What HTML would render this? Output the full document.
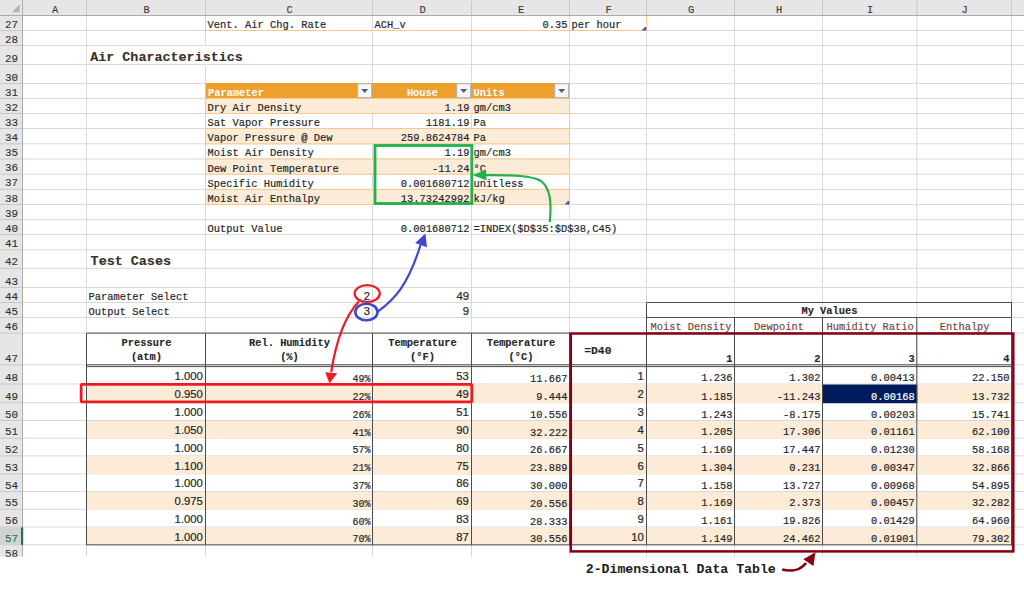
<!DOCTYPE html>
<html><head><meta charset="utf-8"><style>
html,body{margin:0;padding:0;background:#fff;overflow:hidden;width:1024px;height:589px}
svg{display:block}
text{white-space:pre}
</style></head><body>
<svg width="1024" height="589" viewBox="0 0 1024 589">
<rect x="0.00" y="0.00" width="1024.00" height="589.00" fill="#ffffff" />
<line x1="86.50" y1="16.00" x2="86.50" y2="556.80" stroke="#d9d9d9" stroke-width="1"/>
<line x1="205.50" y1="16.00" x2="205.50" y2="556.80" stroke="#d9d9d9" stroke-width="1"/>
<line x1="372.50" y1="16.00" x2="372.50" y2="556.80" stroke="#d9d9d9" stroke-width="1"/>
<line x1="471.50" y1="16.00" x2="471.50" y2="556.80" stroke="#d9d9d9" stroke-width="1"/>
<line x1="569.50" y1="16.00" x2="569.50" y2="556.80" stroke="#d9d9d9" stroke-width="1"/>
<line x1="646.50" y1="16.00" x2="646.50" y2="556.80" stroke="#d9d9d9" stroke-width="1"/>
<line x1="734.50" y1="16.00" x2="734.50" y2="556.80" stroke="#d9d9d9" stroke-width="1"/>
<line x1="822.50" y1="16.00" x2="822.50" y2="556.80" stroke="#d9d9d9" stroke-width="1"/>
<line x1="916.80" y1="16.00" x2="916.80" y2="556.80" stroke="#d9d9d9" stroke-width="1"/>
<line x1="1011.50" y1="16.00" x2="1011.50" y2="556.80" stroke="#d9d9d9" stroke-width="1"/>
<line x1="23.00" y1="30.50" x2="1024.00" y2="30.50" stroke="#d9d9d9" stroke-width="1"/>
<line x1="23.00" y1="45.50" x2="1024.00" y2="45.50" stroke="#d9d9d9" stroke-width="1"/>
<line x1="23.00" y1="64.50" x2="1024.00" y2="64.50" stroke="#d9d9d9" stroke-width="1"/>
<line x1="23.00" y1="83.50" x2="1024.00" y2="83.50" stroke="#d9d9d9" stroke-width="1"/>
<line x1="23.00" y1="98.50" x2="1024.00" y2="98.50" stroke="#d9d9d9" stroke-width="1"/>
<line x1="23.00" y1="113.50" x2="1024.00" y2="113.50" stroke="#d9d9d9" stroke-width="1"/>
<line x1="23.00" y1="128.50" x2="1024.00" y2="128.50" stroke="#d9d9d9" stroke-width="1"/>
<line x1="23.00" y1="143.80" x2="1024.00" y2="143.80" stroke="#d9d9d9" stroke-width="1"/>
<line x1="23.00" y1="159.00" x2="1024.00" y2="159.00" stroke="#d9d9d9" stroke-width="1"/>
<line x1="23.00" y1="174.20" x2="1024.00" y2="174.20" stroke="#d9d9d9" stroke-width="1"/>
<line x1="23.00" y1="189.40" x2="1024.00" y2="189.40" stroke="#d9d9d9" stroke-width="1"/>
<line x1="23.00" y1="204.50" x2="1024.00" y2="204.50" stroke="#d9d9d9" stroke-width="1"/>
<line x1="23.00" y1="219.60" x2="1024.00" y2="219.60" stroke="#d9d9d9" stroke-width="1"/>
<line x1="23.00" y1="234.60" x2="1024.00" y2="234.60" stroke="#d9d9d9" stroke-width="1"/>
<line x1="23.00" y1="249.80" x2="1024.00" y2="249.80" stroke="#d9d9d9" stroke-width="1"/>
<line x1="23.00" y1="268.30" x2="1024.00" y2="268.30" stroke="#d9d9d9" stroke-width="1"/>
<line x1="23.00" y1="287.50" x2="1024.00" y2="287.50" stroke="#d9d9d9" stroke-width="1"/>
<line x1="23.00" y1="302.50" x2="1024.00" y2="302.50" stroke="#d9d9d9" stroke-width="1"/>
<line x1="23.00" y1="317.50" x2="1024.00" y2="317.50" stroke="#d9d9d9" stroke-width="1"/>
<line x1="23.00" y1="333.10" x2="1024.00" y2="333.10" stroke="#d9d9d9" stroke-width="1"/>
<line x1="23.00" y1="364.80" x2="1024.00" y2="364.80" stroke="#d9d9d9" stroke-width="1"/>
<line x1="23.00" y1="384.00" x2="1024.00" y2="384.00" stroke="#d9d9d9" stroke-width="1"/>
<line x1="23.00" y1="402.70" x2="1024.00" y2="402.70" stroke="#d9d9d9" stroke-width="1"/>
<line x1="23.00" y1="420.50" x2="1024.00" y2="420.50" stroke="#d9d9d9" stroke-width="1"/>
<line x1="23.00" y1="438.20" x2="1024.00" y2="438.20" stroke="#d9d9d9" stroke-width="1"/>
<line x1="23.00" y1="455.90" x2="1024.00" y2="455.90" stroke="#d9d9d9" stroke-width="1"/>
<line x1="23.00" y1="473.90" x2="1024.00" y2="473.90" stroke="#d9d9d9" stroke-width="1"/>
<line x1="23.00" y1="491.50" x2="1024.00" y2="491.50" stroke="#d9d9d9" stroke-width="1"/>
<line x1="23.00" y1="509.30" x2="1024.00" y2="509.30" stroke="#d9d9d9" stroke-width="1"/>
<line x1="23.00" y1="527.00" x2="1024.00" y2="527.00" stroke="#d9d9d9" stroke-width="1"/>
<line x1="23.00" y1="544.80" x2="1024.00" y2="544.80" stroke="#d9d9d9" stroke-width="1"/>
<rect x="0.00" y="0.00" width="1024.00" height="15.00" fill="#e6e6e6" />
<rect x="0.00" y="0.00" width="22.00" height="556.80" fill="#e6e6e6" />
<line x1="86.50" y1="1.00" x2="86.50" y2="15.00" stroke="#c6c6c6" stroke-width="1"/>
<line x1="205.50" y1="1.00" x2="205.50" y2="15.00" stroke="#c6c6c6" stroke-width="1"/>
<line x1="372.50" y1="1.00" x2="372.50" y2="15.00" stroke="#c6c6c6" stroke-width="1"/>
<line x1="471.50" y1="1.00" x2="471.50" y2="15.00" stroke="#c6c6c6" stroke-width="1"/>
<line x1="569.50" y1="1.00" x2="569.50" y2="15.00" stroke="#c6c6c6" stroke-width="1"/>
<line x1="646.50" y1="1.00" x2="646.50" y2="15.00" stroke="#c6c6c6" stroke-width="1"/>
<line x1="734.50" y1="1.00" x2="734.50" y2="15.00" stroke="#c6c6c6" stroke-width="1"/>
<line x1="822.50" y1="1.00" x2="822.50" y2="15.00" stroke="#c6c6c6" stroke-width="1"/>
<line x1="916.80" y1="1.00" x2="916.80" y2="15.00" stroke="#c6c6c6" stroke-width="1"/>
<line x1="1011.50" y1="1.00" x2="1011.50" y2="15.00" stroke="#c6c6c6" stroke-width="1"/>
<line x1="0.00" y1="15.50" x2="1024.00" y2="15.50" stroke="#ababab" stroke-width="1"/>
<line x1="22.50" y1="0.00" x2="22.50" y2="556.80" stroke="#ababab" stroke-width="1"/>
<line x1="0.00" y1="30.50" x2="22.00" y2="30.50" stroke="#c8c8c8" stroke-width="1"/>
<line x1="0.00" y1="45.50" x2="22.00" y2="45.50" stroke="#c8c8c8" stroke-width="1"/>
<line x1="0.00" y1="64.50" x2="22.00" y2="64.50" stroke="#c8c8c8" stroke-width="1"/>
<line x1="0.00" y1="83.50" x2="22.00" y2="83.50" stroke="#c8c8c8" stroke-width="1"/>
<line x1="0.00" y1="98.50" x2="22.00" y2="98.50" stroke="#c8c8c8" stroke-width="1"/>
<line x1="0.00" y1="113.50" x2="22.00" y2="113.50" stroke="#c8c8c8" stroke-width="1"/>
<line x1="0.00" y1="128.50" x2="22.00" y2="128.50" stroke="#c8c8c8" stroke-width="1"/>
<line x1="0.00" y1="143.80" x2="22.00" y2="143.80" stroke="#c8c8c8" stroke-width="1"/>
<line x1="0.00" y1="159.00" x2="22.00" y2="159.00" stroke="#c8c8c8" stroke-width="1"/>
<line x1="0.00" y1="174.20" x2="22.00" y2="174.20" stroke="#c8c8c8" stroke-width="1"/>
<line x1="0.00" y1="189.40" x2="22.00" y2="189.40" stroke="#c8c8c8" stroke-width="1"/>
<line x1="0.00" y1="204.50" x2="22.00" y2="204.50" stroke="#c8c8c8" stroke-width="1"/>
<line x1="0.00" y1="219.60" x2="22.00" y2="219.60" stroke="#c8c8c8" stroke-width="1"/>
<line x1="0.00" y1="234.60" x2="22.00" y2="234.60" stroke="#c8c8c8" stroke-width="1"/>
<line x1="0.00" y1="249.80" x2="22.00" y2="249.80" stroke="#c8c8c8" stroke-width="1"/>
<line x1="0.00" y1="268.30" x2="22.00" y2="268.30" stroke="#c8c8c8" stroke-width="1"/>
<line x1="0.00" y1="287.50" x2="22.00" y2="287.50" stroke="#c8c8c8" stroke-width="1"/>
<line x1="0.00" y1="302.50" x2="22.00" y2="302.50" stroke="#c8c8c8" stroke-width="1"/>
<line x1="0.00" y1="317.50" x2="22.00" y2="317.50" stroke="#c8c8c8" stroke-width="1"/>
<line x1="0.00" y1="333.10" x2="22.00" y2="333.10" stroke="#c8c8c8" stroke-width="1"/>
<line x1="0.00" y1="364.80" x2="22.00" y2="364.80" stroke="#c8c8c8" stroke-width="1"/>
<line x1="0.00" y1="384.00" x2="22.00" y2="384.00" stroke="#c8c8c8" stroke-width="1"/>
<line x1="0.00" y1="402.70" x2="22.00" y2="402.70" stroke="#c8c8c8" stroke-width="1"/>
<line x1="0.00" y1="420.50" x2="22.00" y2="420.50" stroke="#c8c8c8" stroke-width="1"/>
<line x1="0.00" y1="438.20" x2="22.00" y2="438.20" stroke="#c8c8c8" stroke-width="1"/>
<line x1="0.00" y1="455.90" x2="22.00" y2="455.90" stroke="#c8c8c8" stroke-width="1"/>
<line x1="0.00" y1="473.90" x2="22.00" y2="473.90" stroke="#c8c8c8" stroke-width="1"/>
<line x1="0.00" y1="491.50" x2="22.00" y2="491.50" stroke="#c8c8c8" stroke-width="1"/>
<line x1="0.00" y1="509.30" x2="22.00" y2="509.30" stroke="#c8c8c8" stroke-width="1"/>
<line x1="0.00" y1="527.00" x2="22.00" y2="527.00" stroke="#c8c8c8" stroke-width="1"/>
<line x1="0.00" y1="544.80" x2="22.00" y2="544.80" stroke="#c8c8c8" stroke-width="1"/>
<polygon points="12,12.2 19.6,4.6 19.6,12.2" fill="#b4b4b4"/>
<text x="55.00" y="12.60" text-anchor="middle" font-family='"Liberation Mono", monospace' font-size="10.42" font-weight="normal" fill="#3c3c3c" stroke="#3c3c3c" stroke-width="0.15" >A</text>
<text x="146.50" y="12.60" text-anchor="middle" font-family='"Liberation Mono", monospace' font-size="10.42" font-weight="normal" fill="#3c3c3c" stroke="#3c3c3c" stroke-width="0.15" >B</text>
<text x="289.50" y="12.60" text-anchor="middle" font-family='"Liberation Mono", monospace' font-size="10.42" font-weight="normal" fill="#3c3c3c" stroke="#3c3c3c" stroke-width="0.15" >C</text>
<text x="422.50" y="12.60" text-anchor="middle" font-family='"Liberation Mono", monospace' font-size="10.42" font-weight="normal" fill="#3c3c3c" stroke="#3c3c3c" stroke-width="0.15" >D</text>
<text x="521.00" y="12.60" text-anchor="middle" font-family='"Liberation Mono", monospace' font-size="10.42" font-weight="normal" fill="#3c3c3c" stroke="#3c3c3c" stroke-width="0.15" >E</text>
<text x="608.50" y="12.60" text-anchor="middle" font-family='"Liberation Mono", monospace' font-size="10.42" font-weight="normal" fill="#3c3c3c" stroke="#3c3c3c" stroke-width="0.15" >F</text>
<text x="691.00" y="12.60" text-anchor="middle" font-family='"Liberation Mono", monospace' font-size="10.42" font-weight="normal" fill="#3c3c3c" stroke="#3c3c3c" stroke-width="0.15" >G</text>
<text x="779.00" y="12.60" text-anchor="middle" font-family='"Liberation Mono", monospace' font-size="10.42" font-weight="normal" fill="#3c3c3c" stroke="#3c3c3c" stroke-width="0.15" >H</text>
<text x="870.15" y="12.60" text-anchor="middle" font-family='"Liberation Mono", monospace' font-size="10.42" font-weight="normal" fill="#3c3c3c" stroke="#3c3c3c" stroke-width="0.15" >I</text>
<text x="964.65" y="12.60" text-anchor="middle" font-family='"Liberation Mono", monospace' font-size="10.42" font-weight="normal" fill="#3c3c3c" stroke="#3c3c3c" stroke-width="0.15" >J</text>
<rect x="0.00" y="527.50" width="22.00" height="16.80" fill="#d3d3d3" />
<rect x="21.00" y="527.50" width="2.20" height="17.30" fill="#217346" />
<text x="18.00" y="27.50" text-anchor="end" font-family='"Liberation Mono", monospace' font-size="10.9" font-weight="normal" fill="#333333" stroke="#333333" stroke-width="0.15" >27</text>
<text x="18.00" y="42.50" text-anchor="end" font-family='"Liberation Mono", monospace' font-size="10.9" font-weight="normal" fill="#333333" stroke="#333333" stroke-width="0.15" >28</text>
<text x="18.00" y="61.50" text-anchor="end" font-family='"Liberation Mono", monospace' font-size="10.9" font-weight="normal" fill="#333333" stroke="#333333" stroke-width="0.15" >29</text>
<text x="18.00" y="80.50" text-anchor="end" font-family='"Liberation Mono", monospace' font-size="10.9" font-weight="normal" fill="#333333" stroke="#333333" stroke-width="0.15" >30</text>
<text x="18.00" y="95.50" text-anchor="end" font-family='"Liberation Mono", monospace' font-size="10.9" font-weight="normal" fill="#333333" stroke="#333333" stroke-width="0.15" >31</text>
<text x="18.00" y="110.50" text-anchor="end" font-family='"Liberation Mono", monospace' font-size="10.9" font-weight="normal" fill="#333333" stroke="#333333" stroke-width="0.15" >32</text>
<text x="18.00" y="125.50" text-anchor="end" font-family='"Liberation Mono", monospace' font-size="10.9" font-weight="normal" fill="#333333" stroke="#333333" stroke-width="0.15" >33</text>
<text x="18.00" y="140.80" text-anchor="end" font-family='"Liberation Mono", monospace' font-size="10.9" font-weight="normal" fill="#333333" stroke="#333333" stroke-width="0.15" >34</text>
<text x="18.00" y="156.00" text-anchor="end" font-family='"Liberation Mono", monospace' font-size="10.9" font-weight="normal" fill="#333333" stroke="#333333" stroke-width="0.15" >35</text>
<text x="18.00" y="171.20" text-anchor="end" font-family='"Liberation Mono", monospace' font-size="10.9" font-weight="normal" fill="#333333" stroke="#333333" stroke-width="0.15" >36</text>
<text x="18.00" y="186.40" text-anchor="end" font-family='"Liberation Mono", monospace' font-size="10.9" font-weight="normal" fill="#333333" stroke="#333333" stroke-width="0.15" >37</text>
<text x="18.00" y="201.50" text-anchor="end" font-family='"Liberation Mono", monospace' font-size="10.9" font-weight="normal" fill="#333333" stroke="#333333" stroke-width="0.15" >38</text>
<text x="18.00" y="216.60" text-anchor="end" font-family='"Liberation Mono", monospace' font-size="10.9" font-weight="normal" fill="#333333" stroke="#333333" stroke-width="0.15" >39</text>
<text x="18.00" y="231.60" text-anchor="end" font-family='"Liberation Mono", monospace' font-size="10.9" font-weight="normal" fill="#333333" stroke="#333333" stroke-width="0.15" >40</text>
<text x="18.00" y="246.80" text-anchor="end" font-family='"Liberation Mono", monospace' font-size="10.9" font-weight="normal" fill="#333333" stroke="#333333" stroke-width="0.15" >41</text>
<text x="18.00" y="265.30" text-anchor="end" font-family='"Liberation Mono", monospace' font-size="10.9" font-weight="normal" fill="#333333" stroke="#333333" stroke-width="0.15" >42</text>
<text x="18.00" y="284.50" text-anchor="end" font-family='"Liberation Mono", monospace' font-size="10.9" font-weight="normal" fill="#333333" stroke="#333333" stroke-width="0.15" >43</text>
<text x="18.00" y="299.50" text-anchor="end" font-family='"Liberation Mono", monospace' font-size="10.9" font-weight="normal" fill="#333333" stroke="#333333" stroke-width="0.15" >44</text>
<text x="18.00" y="314.50" text-anchor="end" font-family='"Liberation Mono", monospace' font-size="10.9" font-weight="normal" fill="#333333" stroke="#333333" stroke-width="0.15" >45</text>
<text x="18.00" y="330.10" text-anchor="end" font-family='"Liberation Mono", monospace' font-size="10.9" font-weight="normal" fill="#333333" stroke="#333333" stroke-width="0.15" >46</text>
<text x="18.00" y="361.80" text-anchor="end" font-family='"Liberation Mono", monospace' font-size="10.9" font-weight="normal" fill="#333333" stroke="#333333" stroke-width="0.15" >47</text>
<text x="18.00" y="381.00" text-anchor="end" font-family='"Liberation Mono", monospace' font-size="10.9" font-weight="normal" fill="#333333" stroke="#333333" stroke-width="0.15" >48</text>
<text x="18.00" y="399.70" text-anchor="end" font-family='"Liberation Mono", monospace' font-size="10.9" font-weight="normal" fill="#333333" stroke="#333333" stroke-width="0.15" >49</text>
<text x="18.00" y="417.50" text-anchor="end" font-family='"Liberation Mono", monospace' font-size="10.9" font-weight="normal" fill="#333333" stroke="#333333" stroke-width="0.15" >50</text>
<text x="18.00" y="435.20" text-anchor="end" font-family='"Liberation Mono", monospace' font-size="10.9" font-weight="normal" fill="#333333" stroke="#333333" stroke-width="0.15" >51</text>
<text x="18.00" y="452.90" text-anchor="end" font-family='"Liberation Mono", monospace' font-size="10.9" font-weight="normal" fill="#333333" stroke="#333333" stroke-width="0.15" >52</text>
<text x="18.00" y="470.90" text-anchor="end" font-family='"Liberation Mono", monospace' font-size="10.9" font-weight="normal" fill="#333333" stroke="#333333" stroke-width="0.15" >53</text>
<text x="18.00" y="488.50" text-anchor="end" font-family='"Liberation Mono", monospace' font-size="10.9" font-weight="normal" fill="#333333" stroke="#333333" stroke-width="0.15" >54</text>
<text x="18.00" y="506.30" text-anchor="end" font-family='"Liberation Mono", monospace' font-size="10.9" font-weight="normal" fill="#333333" stroke="#333333" stroke-width="0.15" >55</text>
<text x="18.00" y="524.00" text-anchor="end" font-family='"Liberation Mono", monospace' font-size="10.9" font-weight="normal" fill="#333333" stroke="#333333" stroke-width="0.15" >56</text>
<text x="18.00" y="541.80" text-anchor="end" font-family='"Liberation Mono", monospace' font-size="10.9" font-weight="normal" fill="#217346" stroke="#217346" stroke-width="0.15" >57</text>
<text x="18.00" y="556.50" text-anchor="end" font-family='"Liberation Mono", monospace' font-size="10.9" font-weight="normal" fill="#333333" stroke="#333333" stroke-width="0.15" >58</text>
<rect x="0.00" y="556.80" width="1024.00" height="32.20" fill="#ffffff" />
<text x="207.60" y="27.90" text-anchor="start" font-family='"Liberation Mono", monospace' font-size="10.42" font-weight="normal" fill="#262626" stroke="#262626" stroke-width="0.18" >Vent. Air Chg. Rate</text>
<text x="374.60" y="27.90" text-anchor="start" font-family='"Liberation Mono", monospace' font-size="10.42" font-weight="normal" fill="#262626" stroke="#262626" stroke-width="0.18" >ACH_v</text>
<text x="567.40" y="27.90" text-anchor="end" font-family='"Liberation Mono", monospace' font-size="10.42" font-weight="normal" fill="#262626" stroke="#262626" stroke-width="0.18" >0.35</text>
<text x="571.60" y="27.90" text-anchor="start" font-family='"Liberation Mono", monospace' font-size="10.42" font-weight="normal" fill="#262626" stroke="#262626" stroke-width="0.18" >per hour</text>
<line x1="205.50" y1="30.50" x2="647.00" y2="30.50" stroke="#f6c88d" stroke-width="1"/>
<line x1="205.50" y1="16.00" x2="205.50" y2="31.00" stroke="#f6c88d" stroke-width="1"/>
<line x1="646.50" y1="16.00" x2="646.50" y2="31.00" stroke="#f6c88d" stroke-width="1"/>
<path d="M642.4,28.8 h1.9 v-1.9 h1.9 v3.7 h-3.8 z" fill="#3b4fb8"/>
<rect x="205.00" y="46.00" width="1.20" height="18.80" fill="#ffffff" />
<rect x="569.00" y="220.10" width="1.20" height="14.80" fill="#ffffff" />
<text x="90.20" y="60.60" text-anchor="start" font-family='"Liberation Mono", monospace' font-size="13.4" font-weight="bold" fill="#3a3028" stroke="#3a3028" stroke-width="0.12" >Air Characteristics</text>
<rect x="206.00" y="83.00" width="364.00" height="15.50" fill="#eea02f" />
<rect x="206.00" y="99.00" width="364.00" height="15.00" fill="#fcebd7" />
<rect x="206.00" y="129.00" width="364.00" height="15.30" fill="#fcebd7" />
<rect x="206.00" y="159.50" width="364.00" height="15.20" fill="#fcebd7" />
<rect x="206.00" y="189.90" width="364.00" height="15.10" fill="#fcebd7" />
<line x1="205.50" y1="98.50" x2="570.00" y2="98.50" stroke="#f6c88d" stroke-width="1"/>
<line x1="205.50" y1="113.50" x2="570.00" y2="113.50" stroke="#f6c88d" stroke-width="1"/>
<line x1="205.50" y1="128.50" x2="570.00" y2="128.50" stroke="#f6c88d" stroke-width="1"/>
<line x1="205.50" y1="143.80" x2="570.00" y2="143.80" stroke="#f6c88d" stroke-width="1"/>
<line x1="205.50" y1="159.00" x2="570.00" y2="159.00" stroke="#f6c88d" stroke-width="1"/>
<line x1="205.50" y1="174.20" x2="570.00" y2="174.20" stroke="#f6c88d" stroke-width="1"/>
<line x1="205.50" y1="189.40" x2="570.00" y2="189.40" stroke="#f6c88d" stroke-width="1"/>
<line x1="205.50" y1="204.50" x2="570.00" y2="204.50" stroke="#f6c88d" stroke-width="1"/>
<line x1="205.50" y1="83.00" x2="205.50" y2="205.00" stroke="#f6c88d" stroke-width="1"/>
<line x1="569.50" y1="83.00" x2="569.50" y2="205.00" stroke="#f6c88d" stroke-width="1"/>
<text x="207.90" y="95.90" text-anchor="start" font-family='"Liberation Mono", monospace' font-size="10.42" font-weight="bold" fill="#ffffff" >Parameter</text>
<text x="422.50" y="95.90" text-anchor="middle" font-family='"Liberation Mono", monospace' font-size="10.42" font-weight="bold" fill="#ffffff" >House</text>
<text x="473.60" y="95.90" text-anchor="start" font-family='"Liberation Mono", monospace' font-size="10.42" font-weight="bold" fill="#ffffff" >Units</text>
<rect x="357.70" y="83.70" width="14" height="14" fill="#f6f7fa" stroke="#a9b0bc" stroke-width="1"/>
<polygon points="361.20,89.10 368.20,89.10 364.70,93.10" fill="#5f5f5f"/>
<rect x="456.70" y="83.70" width="14" height="14" fill="#f6f7fa" stroke="#a9b0bc" stroke-width="1"/>
<polygon points="460.20,89.10 467.20,89.10 463.70,93.10" fill="#5f5f5f"/>
<rect x="554.70" y="83.70" width="14" height="14" fill="#f6f7fa" stroke="#a9b0bc" stroke-width="1"/>
<polygon points="558.20,89.10 565.20,89.10 561.70,93.10" fill="#5f5f5f"/>
<text x="207.60" y="110.90" text-anchor="start" font-family='"Liberation Mono", monospace' font-size="10.42" font-weight="normal" fill="#262626" stroke="#262626" stroke-width="0.18" >Dry Air Density</text>
<text x="469.40" y="110.90" text-anchor="end" font-family='"Liberation Mono", monospace' font-size="10.42" font-weight="normal" fill="#262626" stroke="#262626" stroke-width="0.18" >1.19</text>
<text x="473.60" y="110.90" text-anchor="start" font-family='"Liberation Mono", monospace' font-size="10.42" font-weight="normal" fill="#262626" stroke="#262626" stroke-width="0.18" >gm/cm3</text>
<text x="207.60" y="125.90" text-anchor="start" font-family='"Liberation Mono", monospace' font-size="10.42" font-weight="normal" fill="#262626" stroke="#262626" stroke-width="0.18" >Sat Vapor Pressure</text>
<text x="469.40" y="125.90" text-anchor="end" font-family='"Liberation Mono", monospace' font-size="10.42" font-weight="normal" fill="#262626" stroke="#262626" stroke-width="0.18" >1181.19</text>
<text x="473.60" y="125.90" text-anchor="start" font-family='"Liberation Mono", monospace' font-size="10.42" font-weight="normal" fill="#262626" stroke="#262626" stroke-width="0.18" >Pa</text>
<text x="207.60" y="141.20" text-anchor="start" font-family='"Liberation Mono", monospace' font-size="10.42" font-weight="normal" fill="#262626" stroke="#262626" stroke-width="0.18" >Vapor Pressure @ Dew</text>
<text x="469.40" y="141.20" text-anchor="end" font-family='"Liberation Mono", monospace' font-size="10.42" font-weight="normal" fill="#262626" stroke="#262626" stroke-width="0.18" >259.8624784</text>
<text x="473.60" y="141.20" text-anchor="start" font-family='"Liberation Mono", monospace' font-size="10.42" font-weight="normal" fill="#262626" stroke="#262626" stroke-width="0.18" >Pa</text>
<text x="207.60" y="156.40" text-anchor="start" font-family='"Liberation Mono", monospace' font-size="10.42" font-weight="normal" fill="#262626" stroke="#262626" stroke-width="0.18" >Moist Air Density</text>
<text x="469.40" y="156.40" text-anchor="end" font-family='"Liberation Mono", monospace' font-size="10.42" font-weight="normal" fill="#262626" stroke="#262626" stroke-width="0.18" >1.19</text>
<text x="473.60" y="156.40" text-anchor="start" font-family='"Liberation Mono", monospace' font-size="10.42" font-weight="normal" fill="#262626" stroke="#262626" stroke-width="0.18" >gm/cm3</text>
<text x="207.60" y="171.60" text-anchor="start" font-family='"Liberation Mono", monospace' font-size="10.42" font-weight="normal" fill="#262626" stroke="#262626" stroke-width="0.18" >Dew Point Temperature</text>
<text x="469.40" y="171.60" text-anchor="end" font-family='"Liberation Mono", monospace' font-size="10.42" font-weight="normal" fill="#262626" stroke="#262626" stroke-width="0.18" >-11.24</text>
<text x="473.60" y="171.60" text-anchor="start" font-family='"Liberation Mono", monospace' font-size="10.42" font-weight="normal" fill="#262626" stroke="#262626" stroke-width="0.18" >°C</text>
<text x="207.60" y="186.80" text-anchor="start" font-family='"Liberation Mono", monospace' font-size="10.42" font-weight="normal" fill="#262626" stroke="#262626" stroke-width="0.18" >Specific Humidity</text>
<text x="469.40" y="186.80" text-anchor="end" font-family='"Liberation Mono", monospace' font-size="10.42" font-weight="normal" fill="#262626" stroke="#262626" stroke-width="0.18" >0.001680712</text>
<text x="473.60" y="186.80" text-anchor="start" font-family='"Liberation Mono", monospace' font-size="10.42" font-weight="normal" fill="#262626" stroke="#262626" stroke-width="0.18" >unitless</text>
<text x="207.60" y="201.90" text-anchor="start" font-family='"Liberation Mono", monospace' font-size="10.42" font-weight="normal" fill="#262626" stroke="#262626" stroke-width="0.18" >Moist Air Enthalpy</text>
<text x="469.40" y="201.90" text-anchor="end" font-family='"Liberation Mono", monospace' font-size="10.42" font-weight="normal" fill="#262626" stroke="#262626" stroke-width="0.18" >13.73242992</text>
<text x="473.60" y="201.90" text-anchor="start" font-family='"Liberation Mono", monospace' font-size="10.42" font-weight="normal" fill="#262626" stroke="#262626" stroke-width="0.18" >kJ/kg</text>
<path d="M565.4,202.8 h1.9 v-1.9 h1.9 v3.7 h-3.8 z" fill="#3b4fb8"/>
<text x="207.60" y="232.00" text-anchor="start" font-family='"Liberation Mono", monospace' font-size="10.42" font-weight="normal" fill="#262626" stroke="#262626" stroke-width="0.18" >Output Value</text>
<text x="469.40" y="232.00" text-anchor="end" font-family='"Liberation Mono", monospace' font-size="10.42" font-weight="normal" fill="#262626" stroke="#262626" stroke-width="0.18" >0.001680712</text>
<text x="473.60" y="232.00" text-anchor="start" font-family='"Liberation Mono", monospace' font-size="10.42" font-weight="normal" fill="#262626" stroke="#262626" stroke-width="0.18" >=INDEX($D$35:$D$38,C45)</text>
<text x="90.60" y="264.80" text-anchor="start" font-family='"Liberation Mono", monospace' font-size="13.4" font-weight="bold" fill="#3a3028" stroke="#3a3028" stroke-width="0.12" >Test Cases</text>
<text x="88.60" y="299.90" text-anchor="start" font-family='"Liberation Mono", monospace' font-size="10.42" font-weight="normal" fill="#262626" stroke="#262626" stroke-width="0.18" >Parameter Select</text>
<text x="88.60" y="314.90" text-anchor="start" font-family='"Liberation Mono", monospace' font-size="10.42" font-weight="normal" fill="#262626" stroke="#262626" stroke-width="0.18" >Output Select</text>
<text x="370.10" y="299.70" text-anchor="end" font-family='"Liberation Sans", sans-serif' font-size="11.3" font-weight="normal" fill="#262626" stroke="#262626" stroke-width="0.2" >2</text>
<text x="469.10" y="299.70" text-anchor="end" font-family='"Liberation Sans", sans-serif' font-size="11.3" font-weight="normal" fill="#262626" stroke="#262626" stroke-width="0.2" >49</text>
<text x="370.10" y="314.70" text-anchor="end" font-family='"Liberation Sans", sans-serif' font-size="11.3" font-weight="normal" fill="#262626" stroke="#262626" stroke-width="0.2" >3</text>
<text x="469.10" y="314.70" text-anchor="end" font-family='"Liberation Sans", sans-serif' font-size="11.3" font-weight="normal" fill="#262626" stroke="#262626" stroke-width="0.2" >9</text>
<rect x="87.00" y="384.50" width="925.00" height="18.70" fill="#fcebd7" />
<rect x="87.00" y="421.00" width="925.00" height="17.70" fill="#fcebd7" />
<rect x="87.00" y="456.40" width="925.00" height="18.00" fill="#fcebd7" />
<rect x="87.00" y="492.00" width="925.00" height="17.80" fill="#fcebd7" />
<rect x="87.00" y="527.50" width="925.00" height="17.80" fill="#fcebd7" />
<rect x="823.00" y="384.50" width="94.30" height="18.70" fill="#011c5e" />
<line x1="86.50" y1="333.10" x2="86.50" y2="545.30" stroke="#4d4d4d" stroke-width="1"/>
<line x1="205.50" y1="333.10" x2="205.50" y2="545.30" stroke="#4d4d4d" stroke-width="1"/>
<line x1="372.50" y1="333.10" x2="372.50" y2="545.30" stroke="#4d4d4d" stroke-width="1"/>
<line x1="471.50" y1="333.10" x2="471.50" y2="545.30" stroke="#4d4d4d" stroke-width="1"/>
<line x1="569.50" y1="333.10" x2="569.50" y2="545.30" stroke="#4d4d4d" stroke-width="1"/>
<line x1="86.50" y1="333.10" x2="570.00" y2="333.10" stroke="#4d4d4d" stroke-width="1"/>
<line x1="86.50" y1="364.80" x2="1012.00" y2="364.80" stroke="#4d4d4d" stroke-width="1"/>
<line x1="86.50" y1="366.60" x2="1012.00" y2="366.60" stroke="#4d4d4d" stroke-width="1"/>
<line x1="86.50" y1="544.80" x2="570.00" y2="544.80" stroke="#4d4d4d" stroke-width="1"/>
<line x1="646.50" y1="302.50" x2="646.50" y2="545.30" stroke="#4d4d4d" stroke-width="1"/>
<line x1="734.50" y1="317.50" x2="734.50" y2="545.30" stroke="#4d4d4d" stroke-width="1"/>
<line x1="822.50" y1="317.50" x2="822.50" y2="545.30" stroke="#4d4d4d" stroke-width="1"/>
<line x1="916.80" y1="317.50" x2="916.80" y2="545.30" stroke="#4d4d4d" stroke-width="1"/>
<line x1="1011.50" y1="302.50" x2="1011.50" y2="545.30" stroke="#4d4d4d" stroke-width="1"/>
<line x1="646.50" y1="302.50" x2="1012.00" y2="302.50" stroke="#4d4d4d" stroke-width="1"/>
<line x1="646.50" y1="317.50" x2="1012.00" y2="317.50" stroke="#4d4d4d" stroke-width="1"/>
<line x1="646.50" y1="333.10" x2="1012.00" y2="333.10" stroke="#4d4d4d" stroke-width="1"/>
<line x1="569.50" y1="544.80" x2="1012.00" y2="544.80" stroke="#4d4d4d" stroke-width="1"/>
<text x="146.50" y="346.10" text-anchor="middle" font-family='"Liberation Mono", monospace' font-size="10.42" font-weight="bold" fill="#262626" stroke="#262626" stroke-width="0.12" >Pressure</text>
<text x="146.50" y="360.30" text-anchor="middle" font-family='"Liberation Mono", monospace' font-size="10.42" font-weight="bold" fill="#262626" stroke="#262626" stroke-width="0.12" >(atm)</text>
<text x="289.50" y="346.10" text-anchor="middle" font-family='"Liberation Mono", monospace' font-size="10.42" font-weight="bold" fill="#262626" stroke="#262626" stroke-width="0.12" >Rel. Humidity</text>
<text x="289.50" y="360.30" text-anchor="middle" font-family='"Liberation Mono", monospace' font-size="10.42" font-weight="bold" fill="#262626" stroke="#262626" stroke-width="0.12" >(%)</text>
<text x="422.50" y="346.10" text-anchor="middle" font-family='"Liberation Mono", monospace' font-size="10.42" font-weight="bold" fill="#262626" stroke="#262626" stroke-width="0.12" >Temperature</text>
<text x="422.50" y="360.30" text-anchor="middle" font-family='"Liberation Mono", monospace' font-size="10.42" font-weight="bold" fill="#262626" stroke="#262626" stroke-width="0.12" >(°F)</text>
<text x="521.00" y="346.10" text-anchor="middle" font-family='"Liberation Mono", monospace' font-size="10.42" font-weight="bold" fill="#262626" stroke="#262626" stroke-width="0.12" >Temperature</text>
<text x="521.00" y="360.30" text-anchor="middle" font-family='"Liberation Mono", monospace' font-size="10.42" font-weight="bold" fill="#262626" stroke="#262626" stroke-width="0.12" >(°C)</text>
<text x="584.30" y="353.80" text-anchor="start" font-family='"Liberation Mono", monospace' font-size="11.3" font-weight="bold" fill="#262626" stroke="#262626" stroke-width="0.12" >=D40</text>
<text x="732.40" y="361.60" text-anchor="end" font-family='"Liberation Mono", monospace' font-size="10.42" font-weight="bold" fill="#262626" stroke="#262626" stroke-width="0.12" >1</text>
<text x="820.40" y="361.60" text-anchor="end" font-family='"Liberation Mono", monospace' font-size="10.42" font-weight="bold" fill="#262626" stroke="#262626" stroke-width="0.12" >2</text>
<text x="914.70" y="361.60" text-anchor="end" font-family='"Liberation Mono", monospace' font-size="10.42" font-weight="bold" fill="#262626" stroke="#262626" stroke-width="0.12" >3</text>
<text x="1009.40" y="361.60" text-anchor="end" font-family='"Liberation Mono", monospace' font-size="10.42" font-weight="bold" fill="#262626" stroke="#262626" stroke-width="0.12" >4</text>
<text x="829.50" y="314.00" text-anchor="middle" font-family='"Liberation Mono", monospace' font-size="10.42" font-weight="bold" fill="#262626" stroke="#262626" stroke-width="0.12" >My Values</text>
<text x="691.00" y="329.50" text-anchor="middle" font-family='"Liberation Mono", monospace' font-size="10.42" font-weight="normal" fill="#74483f" stroke="#74483f" stroke-width="0.18" >Moist Density</text>
<text x="779.00" y="329.50" text-anchor="middle" font-family='"Liberation Mono", monospace' font-size="10.42" font-weight="normal" fill="#74483f" stroke="#74483f" stroke-width="0.18" >Dewpoint</text>
<text x="870.15" y="329.50" text-anchor="middle" font-family='"Liberation Mono", monospace' font-size="10.42" font-weight="normal" fill="#74483f" stroke="#74483f" stroke-width="0.18" >Humidity Ratio</text>
<text x="964.65" y="329.50" text-anchor="middle" font-family='"Liberation Mono", monospace' font-size="10.42" font-weight="normal" fill="#74483f" stroke="#74483f" stroke-width="0.18" >Enthalpy</text>
<text x="202.90" y="379.70" text-anchor="end" font-family='"Liberation Sans", sans-serif' font-size="11.3" font-weight="normal" fill="#262626" stroke="#262626" stroke-width="0.2" >1.000</text>
<text x="370.40" y="381.50" text-anchor="end" font-family='"Liberation Mono", monospace' font-size="10.0" font-weight="normal" fill="#262626" stroke="#262626" stroke-width="0.18" >49%</text>
<text x="468.90" y="379.70" text-anchor="end" font-family='"Liberation Sans", sans-serif' font-size="11.3" font-weight="normal" fill="#262626" stroke="#262626" stroke-width="0.2" >53</text>
<text x="567.40" y="381.50" text-anchor="end" font-family='"Liberation Mono", monospace' font-size="10.42" font-weight="normal" fill="#262626" stroke="#262626" stroke-width="0.18" >11.667</text>
<text x="643.90" y="379.70" text-anchor="end" font-family='"Liberation Sans", sans-serif' font-size="11.3" font-weight="normal" fill="#262626" stroke="#262626" stroke-width="0.2" >1</text>
<text x="732.40" y="381.00" text-anchor="end" font-family='"Liberation Mono", monospace' font-size="10.42" font-weight="normal" fill="#262626" stroke="#262626" stroke-width="0.18" >1.236</text>
<text x="820.40" y="381.00" text-anchor="end" font-family='"Liberation Mono", monospace' font-size="10.42" font-weight="normal" fill="#262626" stroke="#262626" stroke-width="0.18" >1.302</text>
<text x="914.70" y="381.00" text-anchor="end" font-family='"Liberation Mono", monospace' font-size="10.42" font-weight="normal" fill="#262626" stroke="#262626" stroke-width="0.18" >0.00413</text>
<text x="1009.40" y="381.00" text-anchor="end" font-family='"Liberation Mono", monospace' font-size="10.42" font-weight="normal" fill="#262626" stroke="#262626" stroke-width="0.18" >22.150</text>
<text x="202.90" y="398.40" text-anchor="end" font-family='"Liberation Sans", sans-serif' font-size="11.3" font-weight="normal" fill="#262626" stroke="#262626" stroke-width="0.2" >0.950</text>
<text x="370.40" y="400.20" text-anchor="end" font-family='"Liberation Mono", monospace' font-size="10.0" font-weight="normal" fill="#262626" stroke="#262626" stroke-width="0.18" >22%</text>
<text x="468.90" y="398.40" text-anchor="end" font-family='"Liberation Sans", sans-serif' font-size="11.3" font-weight="normal" fill="#262626" stroke="#262626" stroke-width="0.2" >49</text>
<text x="567.40" y="400.20" text-anchor="end" font-family='"Liberation Mono", monospace' font-size="10.42" font-weight="normal" fill="#262626" stroke="#262626" stroke-width="0.18" >9.444</text>
<text x="643.90" y="398.40" text-anchor="end" font-family='"Liberation Sans", sans-serif' font-size="11.3" font-weight="normal" fill="#262626" stroke="#262626" stroke-width="0.2" >2</text>
<text x="732.40" y="399.70" text-anchor="end" font-family='"Liberation Mono", monospace' font-size="10.42" font-weight="normal" fill="#262626" stroke="#262626" stroke-width="0.18" >1.185</text>
<text x="820.40" y="399.70" text-anchor="end" font-family='"Liberation Mono", monospace' font-size="10.42" font-weight="normal" fill="#262626" stroke="#262626" stroke-width="0.18" >-11.243</text>
<text x="914.70" y="399.70" text-anchor="end" font-family='"Liberation Mono", monospace' font-size="10.42" font-weight="normal" fill="#ffffff" stroke="#ffffff" stroke-width="0.18" >0.00168</text>
<text x="1009.40" y="399.70" text-anchor="end" font-family='"Liberation Mono", monospace' font-size="10.42" font-weight="normal" fill="#262626" stroke="#262626" stroke-width="0.18" >13.732</text>
<text x="202.90" y="416.20" text-anchor="end" font-family='"Liberation Sans", sans-serif' font-size="11.3" font-weight="normal" fill="#262626" stroke="#262626" stroke-width="0.2" >1.000</text>
<text x="370.40" y="418.00" text-anchor="end" font-family='"Liberation Mono", monospace' font-size="10.0" font-weight="normal" fill="#262626" stroke="#262626" stroke-width="0.18" >26%</text>
<text x="468.90" y="416.20" text-anchor="end" font-family='"Liberation Sans", sans-serif' font-size="11.3" font-weight="normal" fill="#262626" stroke="#262626" stroke-width="0.2" >51</text>
<text x="567.40" y="418.00" text-anchor="end" font-family='"Liberation Mono", monospace' font-size="10.42" font-weight="normal" fill="#262626" stroke="#262626" stroke-width="0.18" >10.556</text>
<text x="643.90" y="416.20" text-anchor="end" font-family='"Liberation Sans", sans-serif' font-size="11.3" font-weight="normal" fill="#262626" stroke="#262626" stroke-width="0.2" >3</text>
<text x="732.40" y="417.50" text-anchor="end" font-family='"Liberation Mono", monospace' font-size="10.42" font-weight="normal" fill="#262626" stroke="#262626" stroke-width="0.18" >1.243</text>
<text x="820.40" y="417.50" text-anchor="end" font-family='"Liberation Mono", monospace' font-size="10.42" font-weight="normal" fill="#262626" stroke="#262626" stroke-width="0.18" >-8.175</text>
<text x="914.70" y="417.50" text-anchor="end" font-family='"Liberation Mono", monospace' font-size="10.42" font-weight="normal" fill="#262626" stroke="#262626" stroke-width="0.18" >0.00203</text>
<text x="1009.40" y="417.50" text-anchor="end" font-family='"Liberation Mono", monospace' font-size="10.42" font-weight="normal" fill="#262626" stroke="#262626" stroke-width="0.18" >15.741</text>
<text x="202.90" y="433.90" text-anchor="end" font-family='"Liberation Sans", sans-serif' font-size="11.3" font-weight="normal" fill="#262626" stroke="#262626" stroke-width="0.2" >1.050</text>
<text x="370.40" y="435.70" text-anchor="end" font-family='"Liberation Mono", monospace' font-size="10.0" font-weight="normal" fill="#262626" stroke="#262626" stroke-width="0.18" >41%</text>
<text x="468.90" y="433.90" text-anchor="end" font-family='"Liberation Sans", sans-serif' font-size="11.3" font-weight="normal" fill="#262626" stroke="#262626" stroke-width="0.2" >90</text>
<text x="567.40" y="435.70" text-anchor="end" font-family='"Liberation Mono", monospace' font-size="10.42" font-weight="normal" fill="#262626" stroke="#262626" stroke-width="0.18" >32.222</text>
<text x="643.90" y="433.90" text-anchor="end" font-family='"Liberation Sans", sans-serif' font-size="11.3" font-weight="normal" fill="#262626" stroke="#262626" stroke-width="0.2" >4</text>
<text x="732.40" y="435.20" text-anchor="end" font-family='"Liberation Mono", monospace' font-size="10.42" font-weight="normal" fill="#262626" stroke="#262626" stroke-width="0.18" >1.205</text>
<text x="820.40" y="435.20" text-anchor="end" font-family='"Liberation Mono", monospace' font-size="10.42" font-weight="normal" fill="#262626" stroke="#262626" stroke-width="0.18" >17.306</text>
<text x="914.70" y="435.20" text-anchor="end" font-family='"Liberation Mono", monospace' font-size="10.42" font-weight="normal" fill="#262626" stroke="#262626" stroke-width="0.18" >0.01161</text>
<text x="1009.40" y="435.20" text-anchor="end" font-family='"Liberation Mono", monospace' font-size="10.42" font-weight="normal" fill="#262626" stroke="#262626" stroke-width="0.18" >62.100</text>
<text x="202.90" y="451.60" text-anchor="end" font-family='"Liberation Sans", sans-serif' font-size="11.3" font-weight="normal" fill="#262626" stroke="#262626" stroke-width="0.2" >1.000</text>
<text x="370.40" y="453.40" text-anchor="end" font-family='"Liberation Mono", monospace' font-size="10.0" font-weight="normal" fill="#262626" stroke="#262626" stroke-width="0.18" >57%</text>
<text x="468.90" y="451.60" text-anchor="end" font-family='"Liberation Sans", sans-serif' font-size="11.3" font-weight="normal" fill="#262626" stroke="#262626" stroke-width="0.2" >80</text>
<text x="567.40" y="453.40" text-anchor="end" font-family='"Liberation Mono", monospace' font-size="10.42" font-weight="normal" fill="#262626" stroke="#262626" stroke-width="0.18" >26.667</text>
<text x="643.90" y="451.60" text-anchor="end" font-family='"Liberation Sans", sans-serif' font-size="11.3" font-weight="normal" fill="#262626" stroke="#262626" stroke-width="0.2" >5</text>
<text x="732.40" y="452.90" text-anchor="end" font-family='"Liberation Mono", monospace' font-size="10.42" font-weight="normal" fill="#262626" stroke="#262626" stroke-width="0.18" >1.169</text>
<text x="820.40" y="452.90" text-anchor="end" font-family='"Liberation Mono", monospace' font-size="10.42" font-weight="normal" fill="#262626" stroke="#262626" stroke-width="0.18" >17.447</text>
<text x="914.70" y="452.90" text-anchor="end" font-family='"Liberation Mono", monospace' font-size="10.42" font-weight="normal" fill="#262626" stroke="#262626" stroke-width="0.18" >0.01230</text>
<text x="1009.40" y="452.90" text-anchor="end" font-family='"Liberation Mono", monospace' font-size="10.42" font-weight="normal" fill="#262626" stroke="#262626" stroke-width="0.18" >58.168</text>
<text x="202.90" y="469.60" text-anchor="end" font-family='"Liberation Sans", sans-serif' font-size="11.3" font-weight="normal" fill="#262626" stroke="#262626" stroke-width="0.2" >1.100</text>
<text x="370.40" y="471.40" text-anchor="end" font-family='"Liberation Mono", monospace' font-size="10.0" font-weight="normal" fill="#262626" stroke="#262626" stroke-width="0.18" >21%</text>
<text x="468.90" y="469.60" text-anchor="end" font-family='"Liberation Sans", sans-serif' font-size="11.3" font-weight="normal" fill="#262626" stroke="#262626" stroke-width="0.2" >75</text>
<text x="567.40" y="471.40" text-anchor="end" font-family='"Liberation Mono", monospace' font-size="10.42" font-weight="normal" fill="#262626" stroke="#262626" stroke-width="0.18" >23.889</text>
<text x="643.90" y="469.60" text-anchor="end" font-family='"Liberation Sans", sans-serif' font-size="11.3" font-weight="normal" fill="#262626" stroke="#262626" stroke-width="0.2" >6</text>
<text x="732.40" y="470.90" text-anchor="end" font-family='"Liberation Mono", monospace' font-size="10.42" font-weight="normal" fill="#262626" stroke="#262626" stroke-width="0.18" >1.304</text>
<text x="820.40" y="470.90" text-anchor="end" font-family='"Liberation Mono", monospace' font-size="10.42" font-weight="normal" fill="#262626" stroke="#262626" stroke-width="0.18" >0.231</text>
<text x="914.70" y="470.90" text-anchor="end" font-family='"Liberation Mono", monospace' font-size="10.42" font-weight="normal" fill="#262626" stroke="#262626" stroke-width="0.18" >0.00347</text>
<text x="1009.40" y="470.90" text-anchor="end" font-family='"Liberation Mono", monospace' font-size="10.42" font-weight="normal" fill="#262626" stroke="#262626" stroke-width="0.18" >32.866</text>
<text x="202.90" y="487.20" text-anchor="end" font-family='"Liberation Sans", sans-serif' font-size="11.3" font-weight="normal" fill="#262626" stroke="#262626" stroke-width="0.2" >1.000</text>
<text x="370.40" y="489.00" text-anchor="end" font-family='"Liberation Mono", monospace' font-size="10.0" font-weight="normal" fill="#262626" stroke="#262626" stroke-width="0.18" >37%</text>
<text x="468.90" y="487.20" text-anchor="end" font-family='"Liberation Sans", sans-serif' font-size="11.3" font-weight="normal" fill="#262626" stroke="#262626" stroke-width="0.2" >86</text>
<text x="567.40" y="489.00" text-anchor="end" font-family='"Liberation Mono", monospace' font-size="10.42" font-weight="normal" fill="#262626" stroke="#262626" stroke-width="0.18" >30.000</text>
<text x="643.90" y="487.20" text-anchor="end" font-family='"Liberation Sans", sans-serif' font-size="11.3" font-weight="normal" fill="#262626" stroke="#262626" stroke-width="0.2" >7</text>
<text x="732.40" y="488.50" text-anchor="end" font-family='"Liberation Mono", monospace' font-size="10.42" font-weight="normal" fill="#262626" stroke="#262626" stroke-width="0.18" >1.158</text>
<text x="820.40" y="488.50" text-anchor="end" font-family='"Liberation Mono", monospace' font-size="10.42" font-weight="normal" fill="#262626" stroke="#262626" stroke-width="0.18" >13.727</text>
<text x="914.70" y="488.50" text-anchor="end" font-family='"Liberation Mono", monospace' font-size="10.42" font-weight="normal" fill="#262626" stroke="#262626" stroke-width="0.18" >0.00968</text>
<text x="1009.40" y="488.50" text-anchor="end" font-family='"Liberation Mono", monospace' font-size="10.42" font-weight="normal" fill="#262626" stroke="#262626" stroke-width="0.18" >54.895</text>
<text x="202.90" y="505.00" text-anchor="end" font-family='"Liberation Sans", sans-serif' font-size="11.3" font-weight="normal" fill="#262626" stroke="#262626" stroke-width="0.2" >0.975</text>
<text x="370.40" y="506.80" text-anchor="end" font-family='"Liberation Mono", monospace' font-size="10.0" font-weight="normal" fill="#262626" stroke="#262626" stroke-width="0.18" >30%</text>
<text x="468.90" y="505.00" text-anchor="end" font-family='"Liberation Sans", sans-serif' font-size="11.3" font-weight="normal" fill="#262626" stroke="#262626" stroke-width="0.2" >69</text>
<text x="567.40" y="506.80" text-anchor="end" font-family='"Liberation Mono", monospace' font-size="10.42" font-weight="normal" fill="#262626" stroke="#262626" stroke-width="0.18" >20.556</text>
<text x="643.90" y="505.00" text-anchor="end" font-family='"Liberation Sans", sans-serif' font-size="11.3" font-weight="normal" fill="#262626" stroke="#262626" stroke-width="0.2" >8</text>
<text x="732.40" y="506.30" text-anchor="end" font-family='"Liberation Mono", monospace' font-size="10.42" font-weight="normal" fill="#262626" stroke="#262626" stroke-width="0.18" >1.169</text>
<text x="820.40" y="506.30" text-anchor="end" font-family='"Liberation Mono", monospace' font-size="10.42" font-weight="normal" fill="#262626" stroke="#262626" stroke-width="0.18" >2.373</text>
<text x="914.70" y="506.30" text-anchor="end" font-family='"Liberation Mono", monospace' font-size="10.42" font-weight="normal" fill="#262626" stroke="#262626" stroke-width="0.18" >0.00457</text>
<text x="1009.40" y="506.30" text-anchor="end" font-family='"Liberation Mono", monospace' font-size="10.42" font-weight="normal" fill="#262626" stroke="#262626" stroke-width="0.18" >32.282</text>
<text x="202.90" y="522.70" text-anchor="end" font-family='"Liberation Sans", sans-serif' font-size="11.3" font-weight="normal" fill="#262626" stroke="#262626" stroke-width="0.2" >1.000</text>
<text x="370.40" y="524.50" text-anchor="end" font-family='"Liberation Mono", monospace' font-size="10.0" font-weight="normal" fill="#262626" stroke="#262626" stroke-width="0.18" >60%</text>
<text x="468.90" y="522.70" text-anchor="end" font-family='"Liberation Sans", sans-serif' font-size="11.3" font-weight="normal" fill="#262626" stroke="#262626" stroke-width="0.2" >83</text>
<text x="567.40" y="524.50" text-anchor="end" font-family='"Liberation Mono", monospace' font-size="10.42" font-weight="normal" fill="#262626" stroke="#262626" stroke-width="0.18" >28.333</text>
<text x="643.90" y="522.70" text-anchor="end" font-family='"Liberation Sans", sans-serif' font-size="11.3" font-weight="normal" fill="#262626" stroke="#262626" stroke-width="0.2" >9</text>
<text x="732.40" y="524.00" text-anchor="end" font-family='"Liberation Mono", monospace' font-size="10.42" font-weight="normal" fill="#262626" stroke="#262626" stroke-width="0.18" >1.161</text>
<text x="820.40" y="524.00" text-anchor="end" font-family='"Liberation Mono", monospace' font-size="10.42" font-weight="normal" fill="#262626" stroke="#262626" stroke-width="0.18" >19.826</text>
<text x="914.70" y="524.00" text-anchor="end" font-family='"Liberation Mono", monospace' font-size="10.42" font-weight="normal" fill="#262626" stroke="#262626" stroke-width="0.18" >0.01429</text>
<text x="1009.40" y="524.00" text-anchor="end" font-family='"Liberation Mono", monospace' font-size="10.42" font-weight="normal" fill="#262626" stroke="#262626" stroke-width="0.18" >64.960</text>
<text x="202.90" y="540.50" text-anchor="end" font-family='"Liberation Sans", sans-serif' font-size="11.3" font-weight="normal" fill="#262626" stroke="#262626" stroke-width="0.2" >1.000</text>
<text x="370.40" y="542.30" text-anchor="end" font-family='"Liberation Mono", monospace' font-size="10.0" font-weight="normal" fill="#262626" stroke="#262626" stroke-width="0.18" >70%</text>
<text x="468.90" y="540.50" text-anchor="end" font-family='"Liberation Sans", sans-serif' font-size="11.3" font-weight="normal" fill="#262626" stroke="#262626" stroke-width="0.2" >87</text>
<text x="567.40" y="542.30" text-anchor="end" font-family='"Liberation Mono", monospace' font-size="10.42" font-weight="normal" fill="#262626" stroke="#262626" stroke-width="0.18" >30.556</text>
<text x="643.90" y="540.50" text-anchor="end" font-family='"Liberation Sans", sans-serif' font-size="11.3" font-weight="normal" fill="#262626" stroke="#262626" stroke-width="0.2" >10</text>
<text x="732.40" y="541.80" text-anchor="end" font-family='"Liberation Mono", monospace' font-size="10.42" font-weight="normal" fill="#262626" stroke="#262626" stroke-width="0.18" >1.149</text>
<text x="820.40" y="541.80" text-anchor="end" font-family='"Liberation Mono", monospace' font-size="10.42" font-weight="normal" fill="#262626" stroke="#262626" stroke-width="0.18" >24.462</text>
<text x="914.70" y="541.80" text-anchor="end" font-family='"Liberation Mono", monospace' font-size="10.42" font-weight="normal" fill="#262626" stroke="#262626" stroke-width="0.18" >0.01901</text>
<text x="1009.40" y="541.80" text-anchor="end" font-family='"Liberation Mono", monospace' font-size="10.42" font-weight="normal" fill="#262626" stroke="#262626" stroke-width="0.18" >79.302</text>
<rect x="375" y="145.5" width="96.8" height="58" fill="none" stroke="#22b14c" stroke-width="2.8"/>
<path d="M549.8,222 C551.5,204 551,189 541,181 C531,175 510,175.3 485,175.2" fill="none" stroke="#22b14c" stroke-width="2.2"/>
<polygon points="472.4,175 486,169.8 486.6,180.4" fill="#22b14c"/>
<ellipse cx="367.2" cy="293.6" rx="12.6" ry="8.4" fill="none" stroke="#ed1c24" stroke-width="2.2"/>
<ellipse cx="366.4" cy="312.0" rx="11.1" ry="8.3" fill="none" stroke="#3f48cc" stroke-width="2.6"/>
<path d="M377.8,311.7 C395,299 408,285 420.5,245" fill="none" stroke="#3f48cc" stroke-width="2.2"/>
<polygon points="425.4,233.6 415.2,242.9 427,247.2" fill="#3f48cc"/>
<path d="M359,301.3 C347,314 337,335 331.2,372" fill="none" stroke="#ed1c24" stroke-width="2.2"/>
<polygon points="325.3,372.3 337.2,373.2 329.5,383.4" fill="#ed1c24"/>
<rect x="81.15" y="384.3" width="390.65" height="17.6" rx="1" fill="none" stroke="#ed1c24" stroke-width="2.8"/>
<rect x="570.8" y="333.5" width="442.5" height="217.9" fill="none" stroke="#880015" stroke-width="2.5"/>
<text x="585.80" y="572.50" text-anchor="start" font-family='"Liberation Mono", monospace' font-size="13.2" font-weight="bold" fill="#1e1e1e" stroke="#1e1e1e" stroke-width="0.05" >2-Dimensional Data Table</text>
<path d="M782.2,569.5 C790,571.5 800,571 806,563" fill="none" stroke="#880015" stroke-width="2.7"/>
<polygon points="815.5,552.2 803.3,559.3 813.4,566.1" fill="#880015"/>
</svg></body></html>
